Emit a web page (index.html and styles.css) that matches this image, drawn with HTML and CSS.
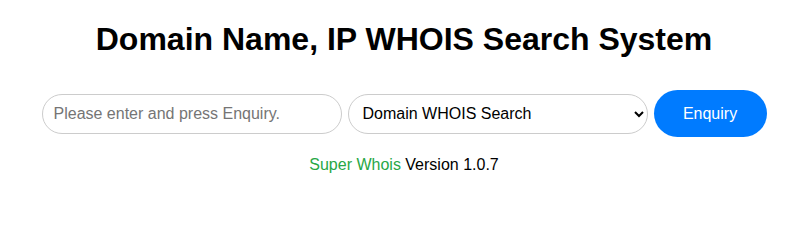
FILE: index.html
```html
<!DOCTYPE html>
<html lang="en">
<head>
    <meta charset="UTF-8">
    <meta name="viewport" content="width=device-width, initial-scale=1.0">
    <title>Super Whois</title>
    <link rel="stylesheet" href="styles.css">
</head>
<body>
    <div class="page">
        <h1>Domain Name, IP WHOIS Search System</h1>
        <form class="search-form">
            <input type="text" class="query-input" placeholder="Please enter and press Enquiry.">
            <select class="query-type">
                <option>Domain WHOIS Search</option>
                <option>IP WHOIS Search</option>
            </select>
            <button type="submit" class="enquiry-button">Enquiry</button>
        </form>
        <p class="version"><span class="brand">Super Whois</span> Version 1.0.7</p>
    </div>
</body>
</html>
```

FILE: styles.css
```css
body {
    font-family: "Liberation Sans", Arial, sans-serif;
    margin: 0;
    background-color: white;
    color: black;
}
.page {
    margin-left: 21px;
    text-align: center;
}
h1 {
    margin: 0;
    padding-top: 21px;
    font-size: 32px;
    font-weight: bold;
}
.search-form {
    display: flex;
    justify-content: center;
    align-items: center;
    gap: 6px;
    margin-top: 32px;
}
.query-input, .query-type {
    box-sizing: border-box;
    width: 300px;
    height: 40px;
    border: 1px solid #ccc;
    border-radius: 20px;
    font-family: inherit;
    font-size: 16px;
    background-color: white;
    color: black;
    outline: none;
}
.query-input {
    padding: 0 11px;
}
.query-input::placeholder {
    color: #757575;
}
.query-type {
    padding: 0 8px 0 10px;
}
.enquiry-button {
    width: 113px;
    height: 47px;
    border: none;
    border-radius: 24px;
    background-color: #007bff;
    color: white;
    font-family: inherit;
    font-size: 16px;
    cursor: pointer;
}
.version {
    margin: 19px 0 0;
    font-size: 16px;
}
.brand {
    color: #28a745;
}
```
